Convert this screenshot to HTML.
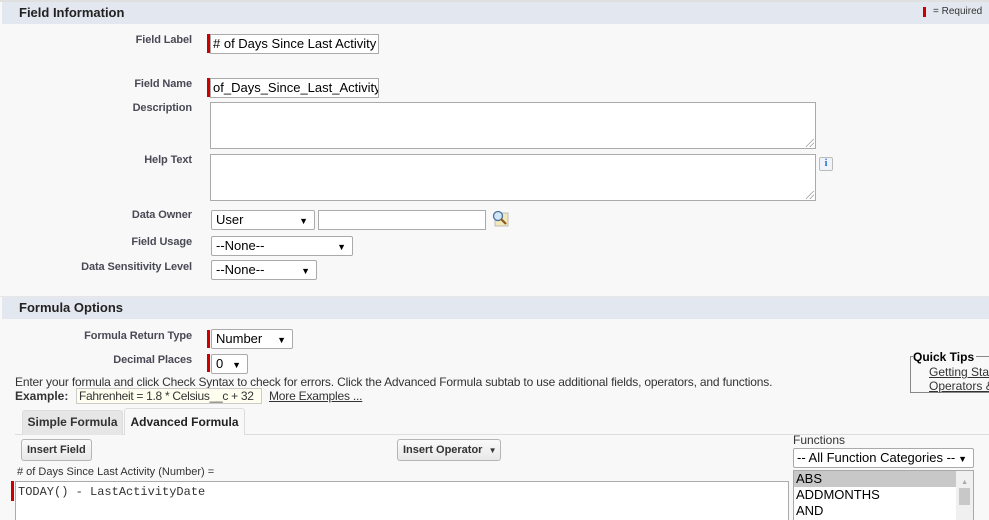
<!DOCTYPE html>
<html><head><meta charset="utf-8">
<style>
*{box-sizing:border-box;margin:0;padding:0}
html,body{width:989px;height:520px;overflow:hidden}
body{background:#f8f8f8;font-family:"Liberation Sans",Arial,sans-serif;color:#000}
#w{position:relative;width:989px;height:520px;overflow:hidden}
.a{position:absolute;white-space:nowrap}
.hdr{position:absolute;left:2px;right:0;height:22px;background:#e3e7ef;font-weight:bold;font-size:13px;color:#222;padding:3px 0 0 17px}
.lbl{position:absolute;width:190px;text-align:right;font-weight:bold;font-size:11px;color:#4a4a56;left:2px;letter-spacing:-0.1px}
.req{position:absolute;width:3px;background:#c00}
.inp{position:absolute;background:#fff;border:1px solid #aaa;font-size:13px;color:#000;padding:1px 2px;white-space:nowrap;overflow:hidden;height:20px;line-height:16px}
.sel{position:absolute;background:#fff;border:1px solid #aaa;border-radius:2px;font-size:13px;padding:1px 4px;height:20px;line-height:16px;white-space:nowrap}
.sel:after{content:"▼";position:absolute;right:6px;top:2px;font-size:9px}
.ta{position:absolute;background:#fff;border:1px solid #aaa}
.ta:after{content:"";position:absolute;right:1px;bottom:1px;width:8px;height:8px;background:linear-gradient(135deg,transparent 45%,#999 45%,#999 52%,transparent 52%,transparent 70%,#999 70%,#999 77%,transparent 77%)}
.btn{position:absolute;background:linear-gradient(#fafafa,#e8e8e8);border:1px solid #b5b5b5;border-radius:3px;font-size:11px;font-weight:bold;color:#333;padding:0 5px;line-height:20px;height:22px;white-space:nowrap}
u{color:#333}
</style></head><body><div id="w">
<div class="a" style="left:0;top:0;width:989px;height:2px;background:#e0e0e0"></div>
<div class="hdr" style="top:2px">Field Information</div>
<div class="a" style="left:923px;top:7px;width:3px;height:10px;background:#c00"></div>
<div class="a" style="left:933px;top:6px;font-size:10px;color:#333">= Required</div>

<div class="lbl" style="top:34px">Field Label</div>
<div class="req" style="left:207px;top:34px;height:19px"></div>
<div class="inp" style="left:210px;top:34px;width:169px">#&nbsp;of Days Since Last Activity</div>
<div class="lbl" style="top:78px">Field Name</div>
<div class="req" style="left:207px;top:78px;height:19px"></div>
<div class="inp" style="left:210px;top:78px;width:169px">of_Days_Since_Last_Activity</div>
<div class="lbl" style="top:102px">Description</div>
<div class="ta" style="left:210px;top:102px;width:606px;height:47px"></div>
<div class="lbl" style="top:154px">Help Text</div>
<div class="ta" style="left:210px;top:154px;width:606px;height:47px"></div>
<div class="a" style="left:819px;top:157px;width:14px;height:14px;border:1px solid #bbb;border-radius:2px;background:#f0f4fa;font-size:10px;font-weight:bold;color:#1a6fc9;text-align:center;line-height:12px;font-family:'Liberation Serif',serif">i</div>

<div class="lbl" style="top:209px">Data Owner</div>
<div class="sel" style="left:211px;top:210px;width:104px">User</div>
<div class="inp" style="left:318px;top:210px;width:168px"></div>
<svg class="a" style="left:492px;top:210px" width="18" height="17" viewBox="0 0 18 17"><rect x="3" y="3" width="13" height="13" fill="#f3e9b8" stroke="#bbb"/><circle cx="6" cy="6" r="4.5" fill="#cfe6f7" stroke="#4a6f9a" stroke-width="1.3"/><line x1="9" y1="9" x2="14" y2="14" stroke="#8a5a20" stroke-width="2.2"/></svg>
<div class="lbl" style="top:236px">Field Usage</div>
<div class="sel" style="left:211px;top:236px;width:142px">--None--</div>
<div class="lbl" style="top:261px">Data Sensitivity Level</div>
<div class="sel" style="left:211px;top:260px;width:106px">--None--</div>

<div class="a" style="left:0;top:296px;width:989px;height:1px;background:#e6e6e6"></div>
<div class="hdr" style="top:297px">Formula Options</div>

<div class="lbl" style="top:330px">Formula Return Type</div>
<div class="req" style="left:207px;top:330px;height:18px"></div>
<div class="sel" style="left:211px;top:329px;width:82px">Number</div>
<div class="lbl" style="top:354px">Decimal Places</div>
<div class="req" style="left:207px;top:354px;height:18px"></div>
<div class="sel" style="left:211px;top:354px;width:37px">0</div>

<div class="a" style="left:15px;top:375px;font-size:12px;color:#333;letter-spacing:-0.17px">Enter your formula and click Check Syntax to check for errors. Click the Advanced Formula subtab to use additional fields, operators, and functions.</div>
<div class="a" style="left:15px;top:389px;font-size:12px;font-weight:bold;color:#333">Example:</div>
<div class="a" style="left:76px;top:388px;width:186px;height:16px;background:#fffff0;border:1px solid #ccc;font-size:12px;color:#333;padding:0 2px;line-height:14px;overflow:hidden;letter-spacing:-0.3px">Fahrenheit = 1.8 * Celsius__c + 32</div>
<div class="a" style="left:269px;top:389px;font-size:12px;letter-spacing:-0.2px"><u>More Examples ...</u></div>

<div class="a" style="left:910px;top:356px;width:79px;height:37px;border-left:1px solid #888;border-bottom:1px solid #888;border-top:1px solid #888"></div>
<div class="a" style="left:913px;top:350px;font-size:12px;font-weight:bold;background:#f8f8f8;padding-right:2px">Quick Tips</div>
<div class="a" style="left:929px;top:365px;width:60px;overflow:hidden;font-size:12px"><u>Getting Started</u></div>
<div class="a" style="left:929px;top:379px;width:60px;overflow:hidden;font-size:12px"><u>Operators &amp; Functions</u></div>

<div class="a" style="left:15px;top:434px;width:974px;height:1px;background:#ddd"></div>
<div class="a" style="left:22px;top:410px;width:101px;height:25px;background:#e6e6e6;border:1px solid #ddd;border-bottom:none;border-radius:3px 3px 0 0;font-size:12px;font-weight:bold;color:#333;text-align:center;line-height:23px">Simple Formula</div>
<div class="a" style="left:124px;top:408px;width:121px;height:27px;background:#f8f8f8;border:1px solid #ddd;border-bottom:none;border-radius:3px 3px 0 0;font-size:12px;font-weight:bold;color:#222;text-align:center;line-height:26px">Advanced Formula</div>

<div class="btn" style="left:21px;top:439px">Insert Field</div>
<div class="btn" style="left:397px;top:439px;width:104px">Insert Operator&nbsp;&nbsp;<span style="font-size:8px">▼</span></div>
<div class="a" style="left:17px;top:466px;font-size:11px;color:#333">#&nbsp;of Days Since Last Activity (Number) =</div>
<div class="req" style="left:11px;top:481px;height:20px"></div>
<div class="a" style="left:15px;top:481px;width:774px;height:39px;background:#fff;border:1px solid #aaa;border-bottom:none;font-family:'Liberation Mono',monospace;font-size:12px;padding:3px 2px;color:#333">TODAY() - LastActivityDate</div>

<div class="a" style="left:793px;top:433px;font-size:12px;color:#333">Functions</div>
<div class="sel" style="left:793px;top:448px;width:181px;font-size:13px;padding-left:3px">-- All Function Categories --</div>
<div class="a" style="left:793px;top:470px;width:181px;height:50px;background:#fff;border:1px solid #aaa;border-bottom:none;font-size:13px;line-height:16px;overflow:hidden">
<div style="background:#c8c8c8;padding-left:2px;width:162px">ABS</div>
<div style="padding-left:2px">ADDMONTHS</div>
<div style="padding-left:2px">AND</div>
<div class="a" style="right:0;top:0;width:17px;height:50px;background:#f0f0f0"></div>
<div class="a" style="right:3px;top:17px;width:11px;height:17px;background:#c8c8c8"></div>
<div class="a" style="right:5px;top:4px;font-size:7px;color:#aaa">▲</div>
</div>
</div></body></html>
